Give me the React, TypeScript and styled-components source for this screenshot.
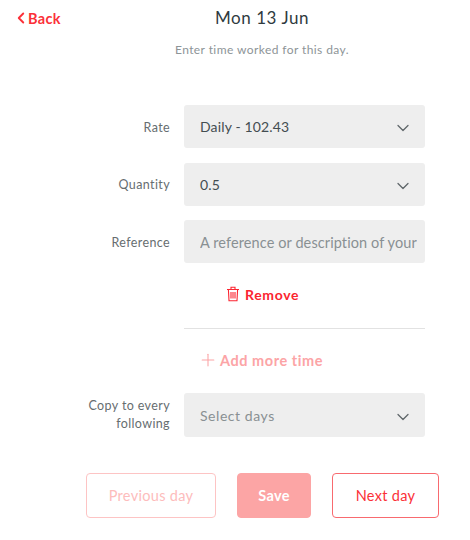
import styled, { createGlobalStyle } from 'styled-components';
import { ChevronLeft, ChevronDown, Plus } from 'lucide-react';

const GlobalStyle = createGlobalStyle`
  body {
    margin: 0;
    background: #fff;
    font-family: Lato, "Open Sans", sans-serif;
  }
`;

const Page = styled.div`
  width: 470px;
  height: 540px;
  overflow: hidden;
  padding-top: 7px;
  box-sizing: border-box;
`;

const Header = styled.header`
  display: grid;
  grid-template-columns: 54px 416px;
  height: 22px;
  align-items: center;
`;

const BackLink = styled.a`
  display: flex;
  align-items: center;
  color: #fb3038;
  font-size: 14.5px;
  font-weight: 700;
  letter-spacing: 0.3px;
  white-space: nowrap;
  svg {
    flex-shrink: 0;
    margin-left: 12px;
    margin-right: -2px;
  }
`;

const Title = styled.h1`
  margin: 0;
  width: 416px;
  text-align: center;
  font-size: 17px;
  font-weight: 400;
  color: #2f3a3f;
  letter-spacing: 0.55px;
  position: relative;
  top: -1px;
`;

const Subtitle = styled.p`
  margin: 12px 0 0 54px;
  width: 416px;
  height: 18px;
  line-height: 18px;
  text-align: center;
  font-size: 12px;
  color: #8d9497;
  letter-spacing: 0.42px;
`;

const Form = styled.form`
  display: flex;
  flex-direction: column;
  margin-top: 46px;
`;

const Row = styled.div<{ $gap?: number }>`
  display: grid;
  grid-template-columns: 170px 241px;
  column-gap: 14px;
  align-items: center;
  margin-bottom: ${(p) => p.$gap ?? 15}px;
`;

const Label = styled.label<{ $drop?: number }>`
  text-align: right;
  font-size: 12.5px;
  line-height: 18px;
  letter-spacing: 0.38px;
  color: #666d70;
  padding-top: ${(p) => p.$drop ?? 0}px;
`;

const Field = styled.div<{ $tall?: boolean; $muted?: boolean }>`
  display: flex;
  align-items: center;
  justify-content: space-between;
  height: ${(p) => (p.$tall ? 44 : 43)}px;
  padding: 0 12px 0 16px;
  box-sizing: border-box;
  border-radius: 3px;
  background: #eeeeee;
  color: ${(p) => (p.$muted ? '#899093' : '#434d51')};
  font-size: 14px;
  letter-spacing: ${(p) => (p.$muted ? 0.55 : 0.15)}px;
  svg {
    color: #5f6669;
    flex-shrink: 0;
    margin-top: 3px;
  }
`;

const ReferenceInput = styled.input`
  width: 100%;
  height: 43px;
  border: 0;
  outline: 0;
  padding: 1px 8px 0 16px;
  box-sizing: border-box;
  border-radius: 3px;
  background: #eeeeee;
  font-family: inherit;
  font-size: 14.5px;
  letter-spacing: 0.1px;
  &::placeholder {
    color: #899093;
    opacity: 1;
  }
`;

const RemoveRow = styled.div`
  display: flex;
  align-items: center;
  margin: 6px 0 0 226px;
  height: 50px;
  color: #fb2530;
  font-size: 14px;
  font-weight: 700;
  letter-spacing: 0.65px;
  gap: 5px;
`;

const Divider = styled.hr`
  width: 241px;
  margin: 9px 0 0 184px;
  border: 0;
  border-top: 1px solid #e2e2e2;
`;

const AddMore = styled.div`
  display: flex;
  align-items: center;
  margin: 20px 0 0 198px;
  height: 22px;
  color: #fca4a6;
  font-size: 14.5px;
  font-weight: 700;
  letter-spacing: 0.55px;
  gap: 2px;
`;

const CopyRow = styled(Row)`
  margin-top: 22px;
  margin-bottom: 36px;
`;

const Actions = styled.div`
  display: flex;
  padding-left: 86px;
`;

const Button = styled.button<{ $variant: 'faded' | 'solid' | 'outline'; $width: number; $gap: number }>`
  width: ${(p) => p.$width}px;
  height: 45px;
  margin-right: ${(p) => p.$gap}px;
  border-radius: 4px;
  font-family: inherit;
  font-size: 14.5px;
  letter-spacing: 0.3px;
  font-weight: ${(p) => (p.$variant === 'solid' ? 700 : 400)};
  background: ${(p) => (p.$variant === 'solid' ? '#fca5a5' : '#fff')};
  color: ${(p) => (p.$variant === 'solid' ? '#fff' : p.$variant === 'faded' ? '#fdbcbc' : '#fb3038')};
  border: 1px solid
    ${(p) => (p.$variant === 'solid' ? '#fca5a5' : p.$variant === 'faded' ? '#fdc4c4' : '#f86a6f')};
`;

// lucide's trash is too squat next to the reference, this one has the three ribs
const TrashIcon = () => (
  <svg width="14" height="16" viewBox="0 0 14 16" fill="none" stroke="currentColor" strokeWidth="1.1">
    <path d="M1 3.5h12M5 3.5V1.2h4v2.3M2.4 3.5l.6 11.3h8l.6-11.3M5 6v6.5M7 6v6.5M9 6v6.5" />
  </svg>
);

export default function App() {
  return (
    <Page>
      <GlobalStyle />
      <Header>
        <BackLink>
          <ChevronLeft size={18} strokeWidth={2.5} />
          Back
        </BackLink>
        <Title>Mon 13 Jun</Title>
      </Header>
      <Subtitle>Enter time worked for this day.</Subtitle>
      <Form>
        <Row>
          <Label $drop={2}>Rate</Label>
          <Field>
            Daily - 102.43
            <ChevronDown size={20} strokeWidth={1.5} />
          </Field>
        </Row>
        <Row $gap={14}>
          <Label>Quantity</Label>
          <Field>
            0.5
            <ChevronDown size={20} strokeWidth={1.5} />
          </Field>
        </Row>
        <Row $gap={0}>
          <Label $drop={2}>Reference</Label>
          <ReferenceInput placeholder="A reference or description of your time" />
        </Row>
        <RemoveRow>
          <TrashIcon />
          Remove
        </RemoveRow>
        <Divider />
        <AddMore>
          <Plus size={20} strokeWidth={1.3} />
          Add more time
        </AddMore>
        <CopyRow>
          <Label>
            Copy to every
            <br />
            following
          </Label>
          <Field $tall $muted>
            Select days
            <ChevronDown size={20} strokeWidth={1.5} />
          </Field>
        </CopyRow>
        <Actions>
          <Button type="button" $variant="faded" $width={130} $gap={21}>
            Previous day
          </Button>
          <Button type="button" $variant="solid" $width={74} $gap={21}>
            Save
          </Button>
          <Button type="button" $variant="outline" $width={107} $gap={0}>
            Next day
          </Button>
        </Actions>
      </Form>
    </Page>
  );
}
